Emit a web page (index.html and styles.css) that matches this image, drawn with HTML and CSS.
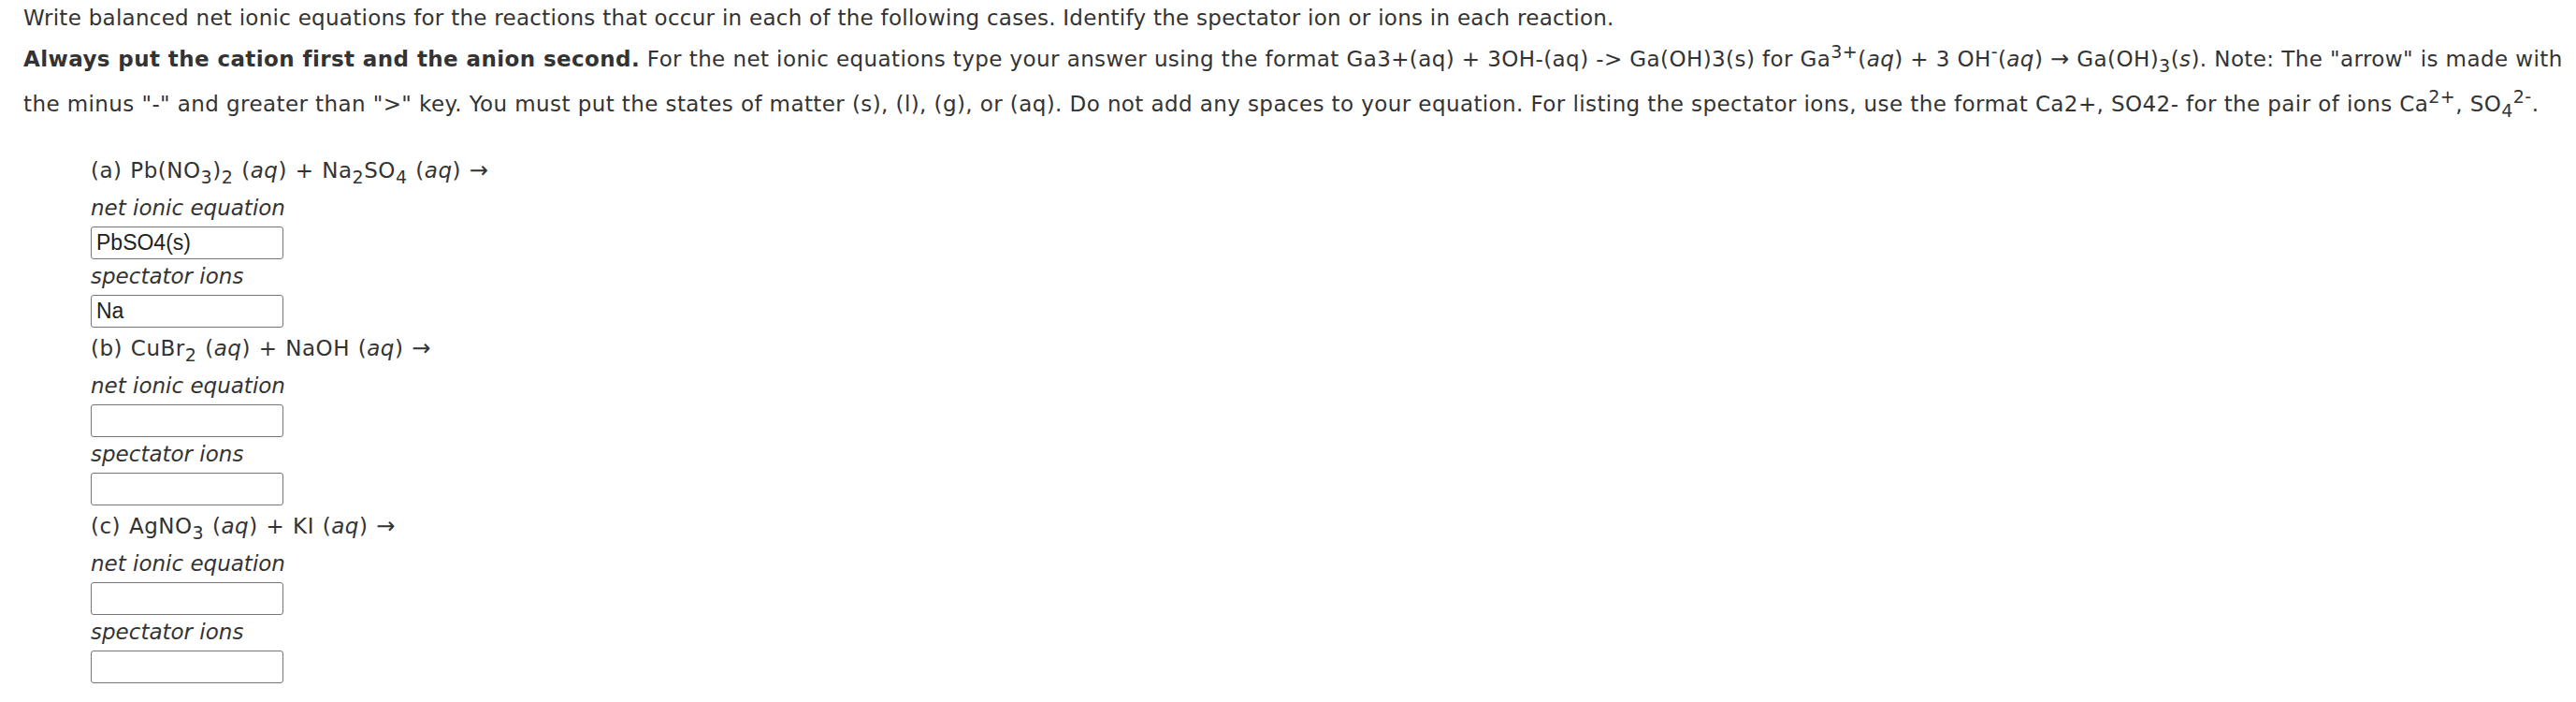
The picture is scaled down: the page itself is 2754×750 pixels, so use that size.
FILE: index.html
```html
<!DOCTYPE html>
<html>
<head>
<meta charset="utf-8">
<link rel="stylesheet" href="styles.css">
</head>
<body>
<div class="page">
  <p class="intro">Write balanced net ionic equations for the reactions that occur in each of the following cases. Identify the spectator ion or ions in each reaction.</p>
  <p class="rules"><b>Always put the cation first and the anion second.</b> For the net ionic equations type your answer using the format Ga3+(aq) + 3OH-(aq) -&gt; Ga(OH)3(s) for Ga<sup>3+</sup>(<i>aq</i>) + 3 OH<sup>-</sup>(<i>aq</i>) <span class="arr">→</span> Ga(OH)<sub>3</sub>(<i>s</i>). Note: The "arrow" is made with<br>the minus "-" and greater than "&gt;" key. You must put the states of matter (s), (l), (g), or (aq). Do not add any spaces to your equation. For listing the spectator ions, use the format Ca2+, SO42- for the pair of ions Ca<sup>2+</sup>, SO<sub>4</sub><sup>2-</sup>.</p>

  <div class="parts">
    <section class="part">
      <div class="rxn">(a) Pb(NO<sub>3</sub>)<sub>2</sub> (<i>aq</i>) + Na<sub>2</sub>SO<sub>4</sub> (<i>aq</i>) <span class="arr">→</span></div>
      <div class="label">net ionic equation</div>
      <input class="answer" type="text" value="PbSO4(s)">
      <div class="label">spectator ions</div>
      <input class="answer" type="text" value="Na">
    </section>
    <section class="part">
      <div class="rxn">(b) CuBr<sub>2</sub> (<i>aq</i>) + NaOH (<i>aq</i>) <span class="arr">→</span></div>
      <div class="label">net ionic equation</div>
      <input class="answer" type="text" value="">
      <div class="label">spectator ions</div>
      <input class="answer" type="text" value="">
    </section>
    <section class="part">
      <div class="rxn">(c) AgNO<sub>3</sub> (<i>aq</i>) + KI (<i>aq</i>) <span class="arr">→</span></div>
      <div class="label">net ionic equation</div>
      <input class="answer" type="text" value="">
      <div class="label">spectator ions</div>
      <input class="answer" type="text" value="">
    </section>
  </div>
</div>
</body>
</html>
```

FILE: styles.css
```css
html, body {
  margin: 0;
  padding: 0;
  background: #ffffff;
}

.page {
  padding: 0 0 0 25px;
  font-family: Verdana, "DejaVu Sans", sans-serif;
  font-size: 23px;
  color: #333333;
  white-space: nowrap;
}

p {
  margin: 0;
}

.intro {
  line-height: 38px;
  letter-spacing: 0.27px;
}

.rules {
  margin-top: 1px;
  line-height: 48px;
  letter-spacing: 0.41px;
}

.rules b {
  font-weight: bold;
}

sub, sup {
  font-size: 0.83em;
  line-height: 0;
}

.arr {
  font-size: 1.05em;
}

.parts {
  margin-top: 25px;
  padding-left: 72px;
  display: flex;
  flex-direction: column;
}

.part {
  display: flex;
  flex-direction: column;
  align-items: flex-start;
}

.rxn {
  line-height: 44px;
  height: 44px;
  letter-spacing: 0.5px;
  word-spacing: 1px;
}

.label {
  font-style: italic;
  line-height: 36px;
  padding-bottom: 2px;
}

.answer {
  box-sizing: border-box;
  width: 206px;
  height: 35px;
  margin: 0;
  padding: 0 5px;
  border: 1px solid #767676;
  border-radius: 3px;
  font-family: "Liberation Sans", Arial, sans-serif;
  font-size: 23px;
  color: #222222;
  background: #ffffff;
  outline: none;
}
```
